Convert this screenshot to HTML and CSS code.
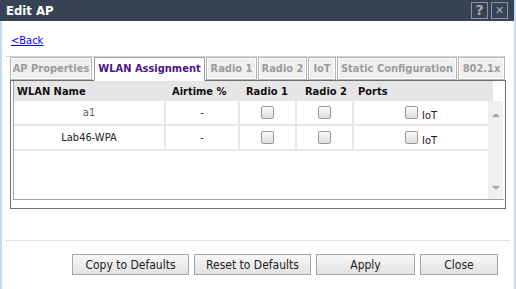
FILE: index.html
```html
<!DOCTYPE html>
<html>
<head>
<meta charset="utf-8">
<link rel="stylesheet" href="styles.css">
</head>
<body>
<div class="page">
  <div class="dialog">
    <div class="titlebar">
      <span class="title">Edit AP</span>
      <div class="tools">
        <span class="tool">?</span>
        <span class="tool x">&#x2715;</span>
      </div>
    </div>
    <div class="content">
      <a class="back" href="#">&lt;Back</a>
      <div class="tabbar">
        <span class="tab t1">AP Properties</span>
        <span class="tab t2 active">WLAN Assignment</span>
        <span class="tab t3">Radio 1</span>
        <span class="tab t4">Radio 2</span>
        <span class="tab t5">IoT</span>
        <span class="tab t6">Static Configuration</span>
        <span class="tab t7">802.1x</span>
      </div>
      <div class="panel">
        <div class="inner">
          <div class="head">
            <span class="h c1">WLAN Name</span>
            <span class="h c2">Airtime %</span>
            <span class="h c3">Radio 1</span>
            <span class="h c4">Radio 2</span>
            <span class="h c5">Ports</span>
          </div>
          <div class="body">
            <div class="rows">
              <div class="row">
                <span class="cell b1 name grey">a1</span>
                <span class="cell b2">-</span>
                <span class="cell b3"><span class="cb"></span></span>
                <span class="cell b4"><span class="cb"></span></span>
                <span class="cell b5"><span class="cb"></span><span class="port">IoT</span></span>
              </div>
              <div class="row">
                <span class="cell b1 name">Lab46-WPA</span>
                <span class="cell b2">-</span>
                <span class="cell b3"><span class="cb"></span></span>
                <span class="cell b4"><span class="cb"></span></span>
                <span class="cell b5"><span class="cb"></span><span class="port">IoT</span></span>
              </div>
            </div>
            <div class="scroll">
              <span class="arrow up"></span>
              <span class="arrow down"></span>
            </div>
          </div>
        </div>
      </div>
      <div class="footer">
        <button class="btn w1">Copy to Defaults</button>
        <button class="btn w2">Reset to Defaults</button>
        <button class="btn w3">Apply</button>
        <button class="btn w4">Close</button>
      </div>
    </div>
  </div>
  <div class="edge"></div>
</div>
</body>
</html>
```
FILE: styles.css
```css
html, body {
  margin: 0;
  padding: 0;
  background: #ffffff;
  overflow: hidden;
}
body {
  font-family: "DejaVu Sans Condensed", "DejaVu Sans", sans-serif;
  font-size: 11px;
  color: #222;
}
.page {
  display: flex;
  width: 516px;
  height: 289px;
}
.dialog {
  width: 514px;
  height: 289px;
  display: flex;
  flex-direction: column;
}
.edge {
  width: 2px;
  background: #c7dcf3;
}
.titlebar {
  height: 21px;
  background: #374354;
  display: flex;
  align-items: center;
  justify-content: space-between;
  padding: 0 6px 0 6px;
}
.title {
  color: #ffffff;
  font-weight: bold;
  font-size: 13px;
  font-family: "DejaVu Sans Condensed", "DejaVu Sans", sans-serif;
}
.tools {
  display: flex;
  gap: 3px;
  margin-top: -1px;
}
.tool {
  width: 15px;
  height: 15px;
  border: 1px solid #8c939c;
  color: #a6abb2;
  font-weight: bold;
  font-size: 14px;
  line-height: 15px;
  text-align: center;
  font-family: "DejaVu Sans", sans-serif;
}
.tool.x {
  font-size: 11px;
}
.content {
  flex: 1;
  border-left: 2px solid #c7dcf3;
  display: flex;
  flex-direction: column;
}
.back {
  display: block;
  align-self: flex-start;
  margin: 13px 0 0 9px;
  line-height: 13px;
  color: #0000ee;
  text-decoration: underline;
  font-size: 11px;
}
.tabbar {
  margin: 9px 8px 0 4px;
  border-top: 1px solid #d4d4d4;
  padding-left: 4px;
  display: flex;
  gap: 1px;
  height: 23px;
}
.tab {
  flex: none;
  box-sizing: border-box;
  height: 23px;
  line-height: 21px;
  padding: 0;
  text-align: center;
  white-space: nowrap;
  border: 1px solid #b4b4b4;
  box-shadow: inset 0 0 0 1px #ffffff;
  background: #efefef;
  color: #9c9c9c;
  font-weight: bold;
  font-size: 11px;
  overflow: hidden;
}
.t1 { width: 82px; }
.t2 { width: 111px; margin-left: 1px; }
.t3 { width: 51px; }
.t4 { width: 49px; }
.t5 { width: 28px; }
.t6 { width: 120px; }
.t7 { width: 47px; }
.tab.active {
  background: #ffffff;
  color: #4d1489;
  border-color: #a0a0a0;
  border-bottom-color: #ffffff;
  height: 24px;
  position: relative;
  z-index: 1;
}
.panel {
  margin-left: 8px;
  width: 491px;
  height: 120px;
  border: 1px solid #6e6e6e;
  padding: 0 1px 7px 2px;
}
.inner {
  border-left: 1px solid #a3a395;
  border-bottom: 1px solid #a3a395;
  height: 118px;
  display: flex;
  flex-direction: column;
}
.head {
  display: flex;
  height: 20px;
  width: 479px;
  background: #e6e6e6;
  align-items: center;
}
.h {
  font-weight: bold;
  color: #111;
  padding-left: 3px;
  box-sizing: border-box;
  white-space: nowrap;
}
.c1 { width: 154px; }
.c2 { width: 74px; padding-left: 4px; }
.c3 { width: 59px; padding-left: 4px; }
.c4 { width: 53px; padding-left: 4px; }
.c5 { width: 139px; padding-left: 4px; }
.body {
  flex: 1;
  display: flex;
}
.rows {
  width: 474px;
}
.row {
  display: flex;
  height: 23px;
  border-bottom: 2px solid #e8e8e8;
}
.cell {
  display: flex;
  align-items: center;
  justify-content: center;
  border-right: 2px solid #e8e8e8;
  box-sizing: border-box;
  color: #222;
}
.b1 { width: 152px; }
.b2 { width: 74px; }
.b3 { width: 57px; }
.b4 { width: 57px; }
.b5 { width: 134px; border-right: none; }
.grey { color: #6a5c5c; }
.cb {
  width: 11px;
  height: 11px;
  border: 1px solid #9a9a9a;
  border-radius: 2px;
  background: linear-gradient(#fafafa, #dcdcdc);
}
.port {
  margin-left: 4px;
  margin-top: 5px;
  color: #2e0c2e;
}
.scroll {
  width: 15px;
  background: #f0f0f0;
  display: flex;
  flex-direction: column;
  align-items: center;
  justify-content: space-between;
  padding: 12px 0 9px;
}
.arrow {
  width: 0;
  height: 0;
  border-left: 4px solid transparent;
  border-right: 4px solid transparent;
}
.arrow.up { border-bottom: 4px solid #a6a6a6; }
.arrow.down { border-top: 4px solid #a6a6a6; }
.footer {
  margin: 31px 4px 0 4px;
  border-top: 1px solid #e2e2e2;
  padding: 13px 12px 0 0;
  display: flex;
  justify-content: flex-end;
  gap: 5px;
}
.btn {
  height: 21px;
  margin: 0;
  border: 1px solid #a5a5a5;
  background: linear-gradient(#f7f7f7, #e2e2e2);
  font-family: "DejaVu Sans Condensed", "DejaVu Sans", sans-serif;
  font-size: 12px;
  color: #222;
  padding: 0;
}
.w1 { width: 117px; }
.w2 { width: 117px; }
.w3 { width: 99px; }
.w4 { width: 78px; }
```
